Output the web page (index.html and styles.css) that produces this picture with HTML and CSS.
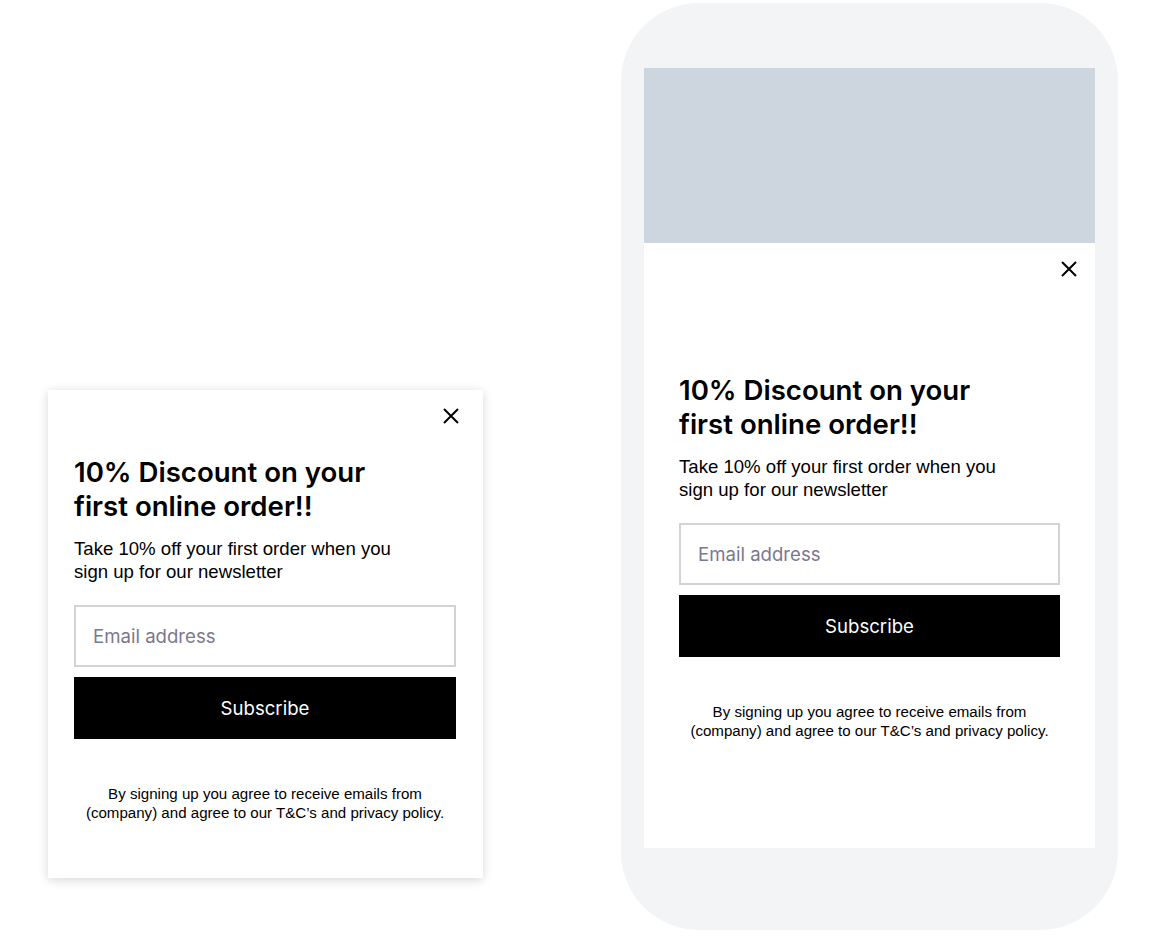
FILE: index.html
```html
<!DOCTYPE html>
<html>
<head>
<meta charset="utf-8">
<link rel="stylesheet" href="styles.css">
</head>
<body>
<div class="page">
  <div class="card">
    <div class="close-row">
      <svg class="close" viewBox="0 0 18 18" width="18" height="18"><path d="M2 2 L16 16 M16 2 L2 16" stroke="#000" stroke-width="2" fill="none"/></svg>
    </div>
    <div class="content card-content">
      <h1 class="title">10% Discount on your<br>first online order!!</h1>
      <p class="sub">Take 10% off your first order when you<br>sign up for our newsletter</p>
      <div class="input">Email address</div>
      <div class="button">Subscribe</div>
      <p class="fine">By signing up you agree to receive emails from<br>(company) and agree to our T&amp;C’s and privacy policy.</p>
    </div>
  </div>
  <div class="phone">
    <div class="screen">
      <div class="hero"></div>
      <div class="close-row phone-close">
        <svg class="close" viewBox="0 0 18 18" width="18" height="18"><path d="M2 2 L16 16 M16 2 L2 16" stroke="#000" stroke-width="2" fill="none"/></svg>
      </div>
      <div class="content phone-content">
        <h1 class="title">10% Discount on your<br>first online order!!</h1>
        <p class="sub">Take 10% off your first order when you<br>sign up for our newsletter</p>
        <div class="input">Email address</div>
        <div class="button">Subscribe</div>
        <p class="fine">By signing up you agree to receive emails from<br>(company) and agree to our T&amp;C’s and privacy policy.</p>
      </div>
    </div>
  </div>
</div>
</body>
</html>
```

FILE: styles.css
```css
html, body {
  margin: 0;
  padding: 0;
  background: #ffffff;
}
body {
  width: 1164px;
  height: 950px;
  overflow: hidden;
}
.page {
  display: flex;
  align-items: flex-start;
}
.card {
  margin-left: 48px;
  margin-top: 390px;
  width: 435px;
  height: 488px;
  background: #fff;
  box-shadow: 0 2px 10px rgba(0, 0, 0, 0.16);
  box-sizing: border-box;
}
.close-row {
  display: flex;
  justify-content: flex-end;
}
.card .close-row {
  padding-top: 17px;
  padding-right: 23px;
}
.close {
  display: block;
}
.content {
  display: flex;
  flex-direction: column;
}
.card-content {
  padding: 30px 27px 0 26px;
}
.title {
  margin: 0;
  font-family: Inter, "Noto Sans", sans-serif;
  font-weight: 600;
  font-size: 27.6px;
  line-height: 34px;
  color: #000;
}
.sub {
  margin: 14px 0 0 0;
  font-family: "Liberation Sans", Arial, sans-serif;
  font-size: 18.6px;
  line-height: 23px;
  color: #000;
}
.input {
  margin-top: 22px;
  height: 62px;
  box-sizing: border-box;
  border: 2px solid #d3d3d3;
  padding-left: 17px;
  display: flex;
  align-items: center;
  font-family: Inter, "Noto Sans", sans-serif;
  font-size: 18.6px;
  color: #7a7890;
}
.button {
  margin-top: 10px;
  height: 62px;
  background: #000;
  color: #fff;
  display: flex;
  align-items: center;
  justify-content: center;
  font-family: Inter, "Noto Sans", sans-serif;
  font-size: 18.6px;
}
.fine {
  margin: 45px 0 0 0;
  text-align: center;
  font-family: "Liberation Sans", Arial, sans-serif;
  font-size: 15.1px;
  line-height: 19px;
  color: #000;
}
.phone {
  margin-left: 138px;
  margin-top: 3px;
  width: 497px;
  height: 927px;
  background: #f3f4f6;
  border-radius: 78px;
  box-sizing: border-box;
  padding: 65px 23px 82px 23px;
}
.screen {
  background: #fff;
  height: 780px;
}
.hero {
  height: 175px;
  background: #cdd5df;
}
.phone-close {
  padding-top: 17px;
  padding-right: 17px;
}
.phone-content {
  padding: 95px 35px 0 35px;
}
```
